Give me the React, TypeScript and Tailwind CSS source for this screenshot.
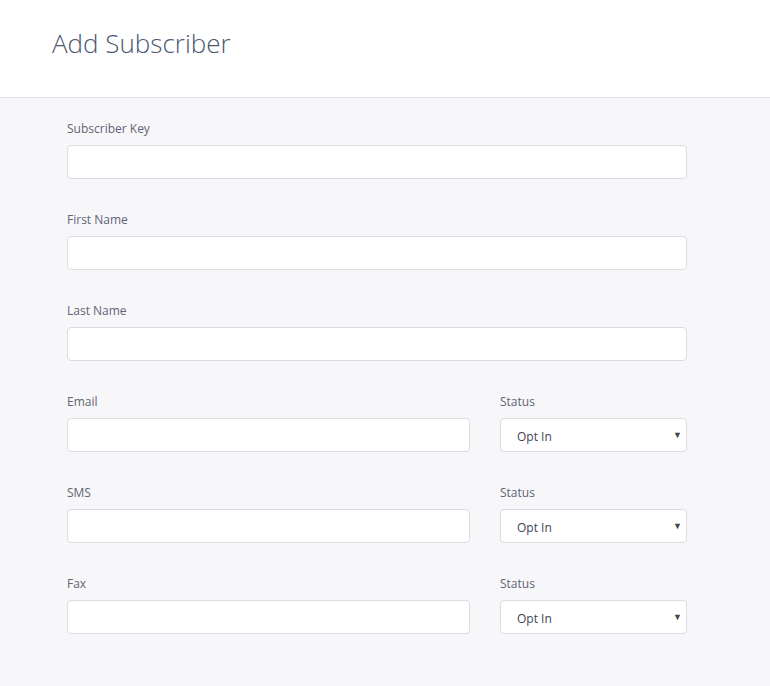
import React from "react";

function Field({ label, className = "" }: { label: string; className?: string }) {
  return (
    <div className={`flex flex-col ${className}`}>
      <label className="text-[12px] leading-[17px] text-[#5f6475] mb-[8px]">{label}</label>
      <input className="h-[34px] w-full rounded-[4px] border border-[#dcdde3] bg-white outline-none" />
    </div>
  );
}

function StatusField() {
  return (
    <div className="flex flex-col w-[187px] shrink-0">
      <label className="text-[12px] leading-[17px] text-[#5f6475] mb-[8px]">Status</label>
      <div className="relative h-[34px] w-full rounded-[4px] border border-[#dcdde3] bg-white flex items-center">
        <span className="pl-[16px] pt-[3px] text-[12px] text-[#3f4556]">Opt In</span>
        <span className="absolute right-[4px] top-[9px] text-[9px] text-[#444]">▼</span>
      </div>
    </div>
  );
}

export default function App() {
  return (
    <div className="min-h-[686px] bg-[#f7f7f9]" style={{ fontFamily: '"Open Sans", sans-serif' }}>
      <div className="h-[98px] bg-white border-b border-[#e2e3e8] pl-[52px] pt-[25px]">
        <h1 className="text-[26px] font-light leading-[36px] text-[#4a5872]">Add Subscriber</h1>
      </div>
      <div className="pl-[67px] w-[687px] pt-[22px] flex flex-col gap-[32px]">
        <Field label="Subscriber Key" />
        <Field label="First Name" />
        <Field label="Last Name" />
        <div className="flex gap-[30px]">
          <Field label="Email" className="flex-1" />
          <StatusField />
        </div>
        <div className="flex gap-[30px]">
          <Field label="SMS" className="flex-1" />
          <StatusField />
        </div>
        <div className="flex gap-[30px]">
          <Field label="Fax" className="flex-1" />
          <StatusField />
        </div>
      </div>
    </div>
  );
}
